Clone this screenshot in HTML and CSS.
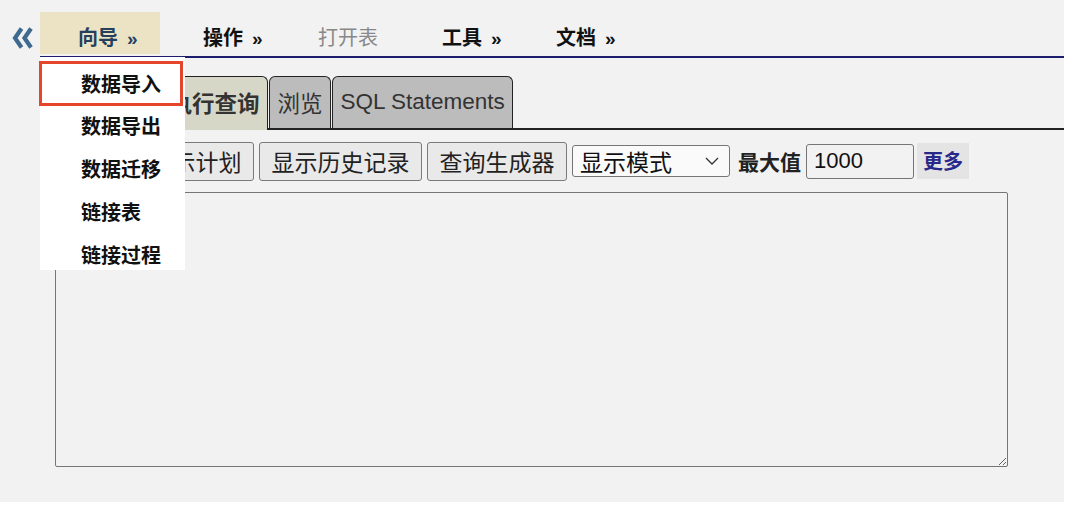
FILE: index.html
```html
<!DOCTYPE html>
<html lang="zh-CN">
<head>
<meta charset="utf-8">
<title>SQL</title>
<link rel="stylesheet" href="styles.css">
</head>
<body>
<div class="page">
  <div class="topbar">
    <svg class="collapse-icon" viewBox="0 0 22 22" width="22" height="22" aria-hidden="true">
      <polyline points="9.5,1.5 3,11 9.5,20.5" fill="none" stroke="#3f6a8f" stroke-width="4.2" stroke-linejoin="miter"/>
      <polyline points="19,1.5 12.5,11 19,20.5" fill="none" stroke="#3f6a8f" stroke-width="4.2" stroke-linejoin="miter"/>
    </svg>
    <nav class="menu">
      <div class="menu-item menu-wizard">向导<span class="raquo">»</span>
        <ul class="dropdown">
          <li class="selected">数据导入</li>
          <li>数据导出</li>
          <li>数据迁移</li>
          <li>链接表</li>
          <li>链接过程</li>
        </ul>
      </div>
      <div class="menu-item menu-op">操作<span class="raquo">»</span></div>
      <div class="menu-item menu-open">打开表</div>
      <div class="menu-item menu-tools">工具<span class="raquo">»</span></div>
      <div class="menu-item menu-docs">文档<span class="raquo">»</span></div>
    </nav>
  </div>
  <div class="content">
    <div class="tabs">
      <div class="tab active">执行查询</div>
      <div class="tab">浏览</div>
      <div class="tab tab-latin">SQL Statements</div>
    </div>
    <div class="toolbar">
      <button class="btn">显示计划</button>
      <button class="btn">显示历史记录</button>
      <button class="btn">查询生成器</button>
      <div class="select">
        <span>显示模式</span>
        <svg viewBox="0 0 14 8" width="14" height="8" aria-hidden="true"><polyline points="1,1 7,7 13,1" fill="none" stroke="#333" stroke-width="1.3"/></svg>
      </div>
      <label class="max-label">最大值</label>
      <input class="max-input" type="text" value="1000">
      <a class="more">更多</a>
    </div>
    <textarea class="editor"></textarea>
  </div>
</div>
</body>
</html>
```
FILE: styles.css
```css
body {
  margin: 0;
  background: #ffffff;
  font-family: "Noto Sans CJK SC", "Liberation Sans", sans-serif;
}

.page {
  width: 1064px;
  height: 502px;
  background: #f2f2f2;
}

.topbar {
  display: flex;
  padding-top: 12px;
}

.collapse-icon {
  margin: 15px 6px 0 12px;
  flex: none;
}

.menu {
  flex: 1;
  display: flex;
  padding-bottom: 2px;
  border-bottom: 2px solid #1d1d6e;
}

.menu-item {
  position: relative;
  box-sizing: border-box;
  height: 42px;
  padding: 11px 0 0 40px;
  line-height: 28px;
  font-size: 20px;
  font-weight: bold;
  color: #111;
  white-space: nowrap;
}

.raquo {
  margin-left: 9px;
  font-family: "Liberation Sans", sans-serif;
  font-size: 19px;
}

.menu-wizard {
  width: 120px;
  padding-left: 38px;
  background: #ece3c4;
  color: #25405d;
}

.menu-op { margin-left: 3px; width: 115px; }
.menu-open { width: 124px; font-weight: normal; color: #888; }
.menu-tools { width: 114px; }
.menu-docs { width: 120px; }

.dropdown {
  position: absolute;
  left: 0;
  top: 45px;
  z-index: 10;
  box-sizing: border-box;
  width: 145px;
  height: 213px;
  margin: 0;
  padding: 4px 0 0 0;
  list-style: none;
  background: #ffffff;
}

.dropdown li {
  height: 43px;
  line-height: 43px;
  padding-left: 41px;
  font-size: 20px;
  font-weight: bold;
  color: #111;
}

.dropdown li.selected {
  box-sizing: border-box;
  height: 45px;
  line-height: 39px;
  margin: 0 2px -2px -1px;
  padding-left: 39px;
  border: 3px solid #e5452b;
}

.content {
  padding: 18px 0 0 55px;
}

.tabs {
  display: flex;
  align-items: flex-end;
  gap: 1px;
  height: 52px;
  padding-left: 106px;
  border-bottom: 2px solid #222;
}

.tab {
  box-sizing: border-box;
  height: 52px;
  padding: 0 7.5px;
  border: 1.5px solid #222;
  border-bottom: none;
  border-radius: 6px 6px 0 0;
  background: #bcbcbc;
  color: #333;
  font-size: 22.5px;
  line-height: 50px;
}

.tab-latin {
  font-family: "Liberation Sans", sans-serif;
}

.tab.active {
  height: 54px;
  margin-bottom: -2px;
  background: #d7d7c7;
  font-weight: bold;
}

.toolbar {
  display: flex;
  align-items: center;
  gap: 5px;
  height: 40px;
  margin-top: 11px;
  padding-left: 82px;
}

.btn {
  box-sizing: border-box;
  height: 39px;
  padding: 0 11.5px;
  border: 1px solid #7a7a7a;
  border-radius: 3px;
  background: #e9e9e9;
  color: #222;
  font-family: "Noto Sans CJK SC", sans-serif;
  font-size: 23px;
  line-height: 37px;
}

.select {
  box-sizing: border-box;
  display: flex;
  align-items: center;
  justify-content: space-between;
  width: 158px;
  height: 32px;
  padding: 0 10px 0 7px;
  border: 1px solid #767676;
  border-radius: 3px;
  background: #fafafa;
  color: #111;
  font-size: 23px;
  line-height: 30px;
}

.max-label {
  margin-left: 3px;
  font-size: 21px;
  font-weight: bold;
  color: #222;
}

.max-input {
  box-sizing: border-box;
  width: 108px;
  height: 35px;
  padding: 0 7px;
  border: 1px solid #767676;
  border-radius: 3px;
  background: #f2f2f2;
  color: #111;
  font-family: "Liberation Sans", sans-serif;
  font-size: 22px;
}

.more {
  margin-left: -2px;
  height: 36px;
  padding: 0 6px;
  line-height: 36px;
  background: #e4e4e4;
  color: #28288a;
  font-size: 20px;
  font-weight: bold;
}

.editor {
  display: block;
  box-sizing: border-box;
  width: 953px;
  height: 275px;
  margin: 11px 0 0 0;
  border: 1px solid #767676;
  border-radius: 2px;
  background: #f2f2f2;
}
```
